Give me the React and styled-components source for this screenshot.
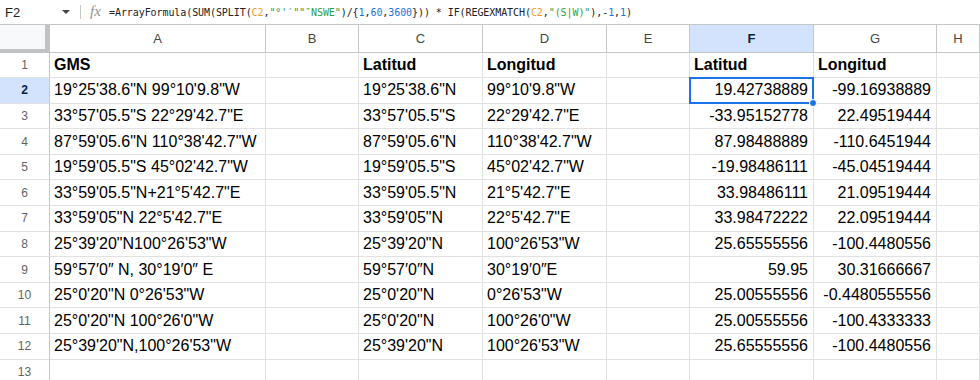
import styled, { createGlobalStyle } from 'styled-components';

const GlobalStyle = createGlobalStyle`
  html, body {
    margin: 0;
    padding: 0;
    background: #ffffff;
  }
  * {
    box-sizing: border-box;
  }
`;

const COLS = '50px 216px 93px 124px 124px 83px 124px 123px 1fr';
const GRID = '#e1e1e1';
const HEAD_LINE = '#c4c7c5';

const Page = styled.div`
  width: 980px;
  height: 380px;
  overflow: hidden;
  font-family: 'Liberation Sans', Arial, sans-serif;
  color: #202124;
`;

const FormulaBar = styled.div`
  display: flex;
  align-items: center;
  height: 25px;
  border-bottom: 1px solid ${HEAD_LINE};
`;

const NameBox = styled.div`
  width: 62px;
  padding-left: 5px;
  font-size: 13px;
  color: #202124;
`;

const Caret = styled.div`
  width: 0;
  height: 0;
  border-left: 4px solid transparent;
  border-right: 4px solid transparent;
  border-top: 4px solid #444746;
  margin-right: 10px;
`;

const Divider = styled.div`
  width: 1px;
  height: 14px;
  background: #c7c7c7;
  margin-right: 9px;
`;

const Fx = styled.span`
  font-family: 'Liberation Serif', serif;
  font-style: italic;
  font-size: 15px;
  color: #8f9396;
  width: 19px;
  margin-top: -2px;
`;

const Formula = styled.div`
  font-family: 'DejaVu Sans Mono', 'Liberation Mono', monospace;
  font-size: 10px;
  letter-spacing: -0.08px;
  color: #202124;
  white-space: pre;
`;

const Tok = styled.span`
  color: ${(p) =>
    p.$kind === 'ref' ? '#f29c1f' : p.$kind === 'str' ? '#2c9f45' : p.$kind === 'num' ? '#1a73e8' : 'inherit'};
`;

const Row = styled.div`
  display: grid;
  grid-template-columns: ${COLS};
  height: ${(p) => p.$h}px;
`;

const Corner = styled.div`
  background: #f8f9fa;
  border-right: 5px solid #c0c2c4;
  border-bottom: 4px solid #c0c2c4;
`;

const ColHead = styled.div`
  display: flex;
  align-items: center;
  justify-content: center;
  font-size: 13px;
  color: ${(p) => (p.$active ? '#041e49' : '#444746')};
  font-weight: ${(p) => (p.$active ? 700 : 400)};
  background: ${(p) => (p.$active ? '#d3e3fd' : '#ffffff')};
  border-right: 1px solid ${HEAD_LINE};
  border-bottom: 1px solid ${HEAD_LINE};
  padding-top: 1px;
`;

const RowHead = styled.div`
  display: flex;
  align-items: center;
  justify-content: center;
  font-size: 12px;
  color: ${(p) => (p.$active ? '#041e49' : '#5f6368')};
  font-weight: ${(p) => (p.$active ? 700 : 400)};
  background: ${(p) => (p.$active ? '#d3e3fd' : '#ffffff')};
  border-right: 1px solid ${HEAD_LINE};
  border-bottom: 1px solid ${GRID};
`;

const Cell = styled.div`
  position: relative;
  display: flex;
  align-items: center;
  justify-content: ${(p) => (p.$right ? 'flex-end' : 'flex-start')};
  padding: ${(p) => (p.$right ? '0 5px 0 0' : '0 0 0 4px')};
  font-size: 16px;
  font-weight: ${(p) => (p.$bold ? 700 : 400)};
  color: #000000;
  white-space: nowrap;
  border-right: 1px solid ${GRID};
  border-bottom: 1px solid ${GRID};
`;

const Selection = styled.div`
  position: absolute;
  z-index: 2;
  top: -1px;
  left: -1px;
  right: -1px;
  bottom: -1px;
  border: 2px solid #1a73e8;
  pointer-events: none;
`;

const Handle = styled.div`
  position: absolute;
  right: -5px;
  bottom: -5px;
  width: 8px;
  height: 8px;
  border-radius: 50%;
  background: #1a73e8;
  border: 1px solid #ffffff;
`;

const letters = ['A', 'B', 'C', 'D', 'E', 'F', 'G', 'H'];

const data = [
  ['GMS', '', 'Latitud', 'Longitud', '', 'Latitud', 'Longitud'],
  ['19°25\'38.6"N 99°10\'9.8"W', '', '19°25\'38.6"N', '99°10\'9.8"W', '', '19.42738889', '-99.16938889'],
  ['33°57\'05.5"S 22°29\'42.7"E', '', '33°57\'05.5"S', '22°29\'42.7"E', '', '-33.95152778', '22.49519444'],
  ['87°59\'05.6"N 110°38\'42.7"W', '', '87°59\'05.6"N', '110°38\'42.7"W', '', '87.98488889', '-110.6451944'],
  ['19°59\'05.5"S 45°02\'42.7"W', '', '19°59\'05.5"S', '45°02\'42.7"W', '', '-19.98486111', '-45.04519444'],
  ['33°59\'05.5"N+21°5\'42.7"E', '', '33°59\'05.5"N', '21°5\'42.7"E', '', '33.98486111', '21.09519444'],
  ['33°59\'05"N 22°5\'42.7"E', '', '33°59\'05"N', '22°5\'42.7"E', '', '33.98472222', '22.09519444'],
  ['25°39\'20"N100°26\'53"W', '', '25°39\'20"N', '100°26\'53"W', '', '25.65555556', '-100.4480556'],
  ['59°57′0″ N, 30°19′0″ E', '', '59°57′0″N', '30°19′0″E', '', '59.95', '30.31666667'],
  ['25°0\'20"N 0°26\'53"W', '', '25°0\'20"N', '0°26\'53"W', '', '25.00555556', '-0.4480555556'],
  ['25°0\'20"N 100°26\'0"W', '', '25°0\'20"N', '100°26\'0"W', '', '25.00555556', '-100.4333333'],
  ['25°39\'20"N,100°26\'53"W', '', '25°39\'20"N', '100°26\'53"W', '', '25.65555556', '-100.4480556'],
  ['', '', '', '', '', '', ''],
];

const formula = [
  ['=ArrayFormula(SUM(SPLIT(', ''],
  ['C2', 'ref'],
  [',', ''],
  ['"°\'′""″NSWE"', 'str'],
  [')/{', ''],
  ['1', 'num'],
  [',', ''],
  ['60', 'num'],
  [',', ''],
  ['3600', 'num'],
  ['})) * IF(REGEXMATCH(', ''],
  ['C2', 'ref'],
  [',', ''],
  ['"(S|W)"', 'str'],
  ['),-', ''],
  ['1', 'num'],
  [',', ''],
  ['1', 'num'],
  [')', ''],
];

const App = () => (
  <Page>
    <GlobalStyle />
    <FormulaBar>
      <NameBox>F2</NameBox>
      <Caret />
      <Divider />
      <Fx>fx</Fx>
      <Formula>
        {formula.map(([t, k], i) => (
          <Tok key={i} $kind={k}>{t}</Tok>
        ))}
      </Formula>
    </FormulaBar>
    <Row $h={27.5}>
      <Corner />
      {letters.map((l) => (
        <ColHead key={l} $active={l === 'F'}>{l}</ColHead>
      ))}
    </Row>
    {data.map((row, r) => (
      <Row key={r} $h={25.6}>
        <RowHead $active={r === 1}>{r + 1}</RowHead>
        {row.map((v, c) => {
          const right = r > 0 && c >= 5;
          return (
            <Cell key={c} $right={right} $bold={r === 0}>
              {v}
              {r === 1 && c === 5 && (
                <Selection>
                  <Handle />
                </Selection>
              )}
            </Cell>
          );
        })}
        <Cell />
      </Row>
    ))}
  </Page>
);

export default App;
